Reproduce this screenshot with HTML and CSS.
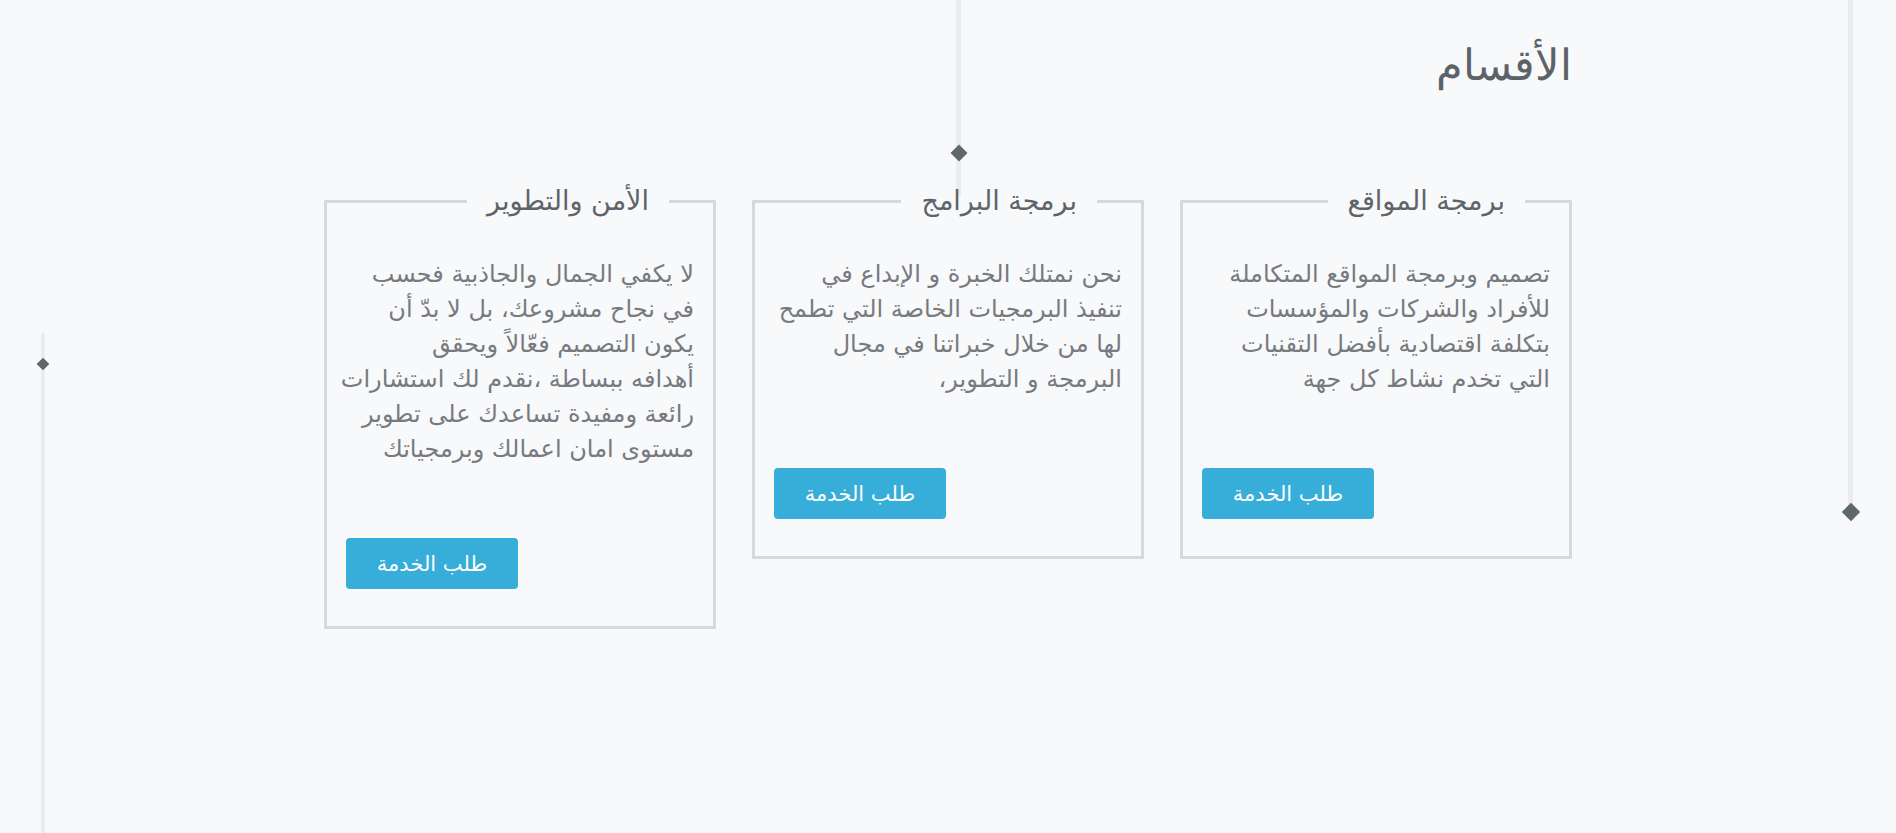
FILE: index.html
```html
<!DOCTYPE html>
<html lang="ar" dir="rtl">
<head>
<meta charset="utf-8">
<title>الأقسام</title>
<link rel="stylesheet" href="styles.css">
</head>
<body>
<div class="page">
  <div class="decor" aria-hidden="true">
    <div class="vline vline-mid"><span class="diamond"></span></div>
    <div class="vline vline-right"><span class="diamond"></span></div>
    <div class="vline vline-left"><span class="diamond diamond-small"></span></div>
  </div>
  <section class="services">
    <h2 class="services-title">الأقسام</h2>
    <div class="cards">
      <fieldset class="card">
        <legend class="card-title">برمجة المواقع</legend>
        <p class="card-text">تصميم وبرمجة المواقع المتكاملة<br>للأفراد والشركات والمؤسسات<br>بتكلفة اقتصادية بأفضل التقنيات<br>التي تخدم نشاط كل جهة</p>
        <div class="card-actions"><a class="btn" href="#">طلب الخدمة</a></div>
      </fieldset>
      <fieldset class="card">
        <legend class="card-title">برمجة البرامج</legend>
        <p class="card-text">نحن نمتلك الخبرة و الإبداع في<br>تنفيذ البرمجيات الخاصة التي تطمح<br>لها من خلال خبراتنا في مجال<br>البرمجة و التطوير،</p>
        <div class="card-actions"><a class="btn" href="#">طلب الخدمة</a></div>
      </fieldset>
      <fieldset class="card">
        <legend class="card-title">الأمن والتطوير</legend>
        <p class="card-text">لا يكفي الجمال والجاذبية فحسب<br>في نجاح مشروعك، بل لا بدّ أن<br>يكون التصميم فعّالاً ويحقق<br>أهدافه ببساطة ،نقدم لك استشارات<br>رائعة ومفيدة تساعدك على تطوير<br>مستوى امان اعمالك وبرمجياتك</p>
        <div class="card-actions"><a class="btn" href="#">طلب الخدمة</a></div>
      </fieldset>
    </div>
  </section>
</div>
</body>
</html>
```
FILE: styles.css
```css
* { box-sizing: border-box; }
html, body { margin: 0; padding: 0; }
body {
  background: #f8f9fb;
  font-family: "DejaVu Sans", "Noto Sans", sans-serif;
  color: #5e6367;
}
.page {
  position: relative;
  width: 1896px;
  height: 833px;
  overflow: hidden;
}
.decor { position: absolute; inset: 0; z-index: 0; }
.vline {
  position: absolute;
  width: 5px;
  background: #ebecee;
}
.vline-mid { left: 956px; top: 0; height: 197px; }
.vline-right { left: 1848px; top: 0; height: 512px; }
.vline-left { left: 41px; top: 333px; bottom: 0; width: 4px; }
.diamond {
  position: absolute;
  width: 12px;
  height: 12px;
  background: #5f676b;
  transform: translate(-50%, -50%) rotate(45deg);
  left: 50%;
}
.vline-mid .diamond { top: 153px; }
.vline-right .diamond { top: 100%; width: 13px; height: 13px; }
.diamond-small { top: 31px; width: 9px; height: 9px; }

.services {
  position: relative;
  z-index: 1;
  width: 1248px;
  margin: 0 auto;
  padding-top: 34px;
}
.services-title {
  margin: 0 0 90px;
  font-size: 43px;
  font-weight: 300;
  line-height: 62px;
  color: #5d6266;
}
.cards {
  display: flex;
  gap: 36px;
  align-items: flex-start;
}
.card {
  width: 392px;
  margin: 0;
  min-width: 0;
  border: 3px solid #d3d9dc;
  padding: 0 19px 37px;
  display: flex;
  flex-direction: column;
}
.card-title {
  margin-right: 25px;
  padding: 0 20px;
  font-size: 27px;
  line-height: 30px;
  color: #606468;
}
.card-text {
  margin: 41px 0 0;
  font-size: 24px;
  line-height: 35px;
  color: #777a7e;
  white-space: nowrap;
}
.card-actions {
  display: flex;
  justify-content: flex-end;
  margin-top: 71px;
}
.btn {
  display: flex;
  align-items: center;
  justify-content: center;
  width: 172px;
  height: 51px;
  background: #36aed9;
  border-radius: 4px;
  color: #fff;
  font-size: 21px;
  text-decoration: none;
}
```
